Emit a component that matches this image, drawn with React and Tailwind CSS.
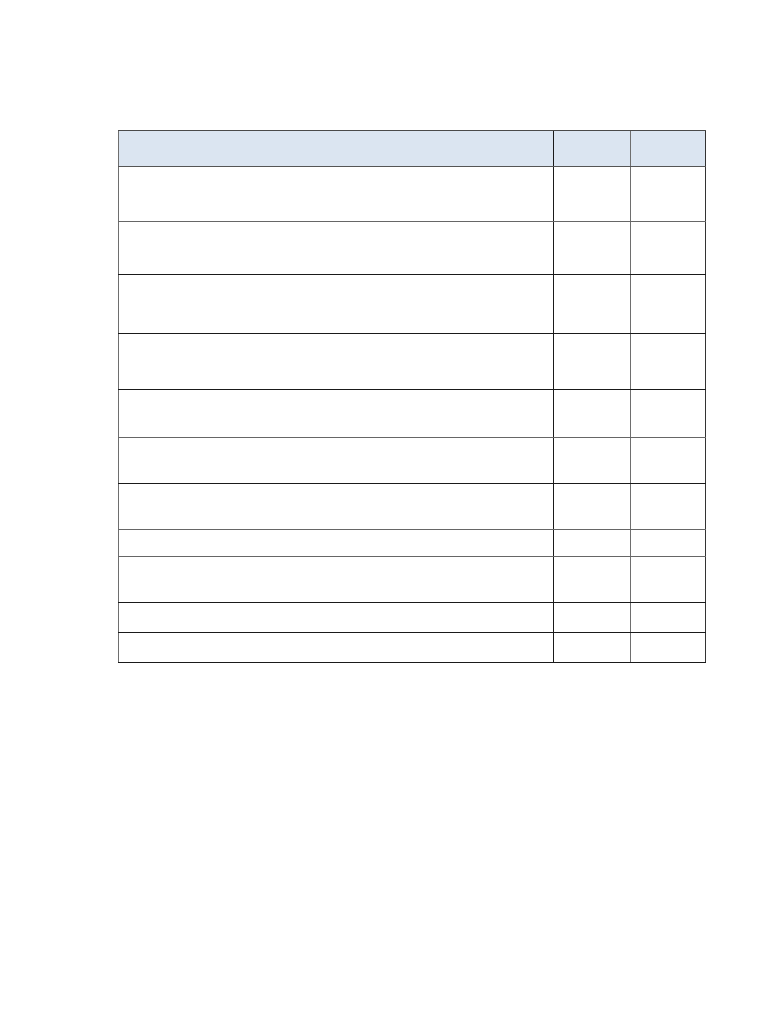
export default function App() {
  const rows = [
    { h: 'h-[36px]', b: 'border-t-[#4a4a4a]', header: true },
    { h: 'h-[55px]', b: 'border-t-[#555555]' },
    { h: 'h-[53px]', b: 'border-t-[#666666]' },
    { h: 'h-[59px]', b: 'border-t-[#1a1a1a]' },
    { h: 'h-[56px]', b: 'border-t-[#1a1a1a]' },
    { h: 'h-[48px]', b: 'border-t-[#1a1a1a]' },
    { h: 'h-[46px]', b: 'border-t-[#666666]' },
    { h: 'h-[46px]', b: 'border-t-[#1a1a1a]' },
    { h: 'h-[27px]', b: 'border-t-[#666666]' },
    { h: 'h-[46px]', b: 'border-t-[#666666]' },
    { h: 'h-[30px]', b: 'border-t-[#1a1a1a]' },
    { h: 'h-[31px]', b: 'border-t-[#1a1a1a]', last: true },
  ];
  return (
    <div className="w-[768px] h-[1024px] bg-white pt-[130px] pl-[118px]" style={{ fontFamily: '"Liberation Sans", Arial, sans-serif' }}>
      <div className="w-[588px] flex flex-col">
        {rows.map((r, i) => (
          <div
            key={i}
            className={`grid grid-cols-[435px_77px_76px] border-t ${r.b} ${r.h} ${r.last ? 'border-b border-b-[#1a1a1a]' : ''} ${r.header ? 'bg-[#dbe5f1]' : 'bg-white'}`}
          >
            <div className="border-l border-l-[#6e6e6e]"></div>
            <div className="border-l border-l-[#1a1a1a]"></div>
            <div className="border-l border-l-[#6e6e6e] border-r border-r-[#333333]"></div>
          </div>
        ))}
      </div>
    </div>
  );
}
